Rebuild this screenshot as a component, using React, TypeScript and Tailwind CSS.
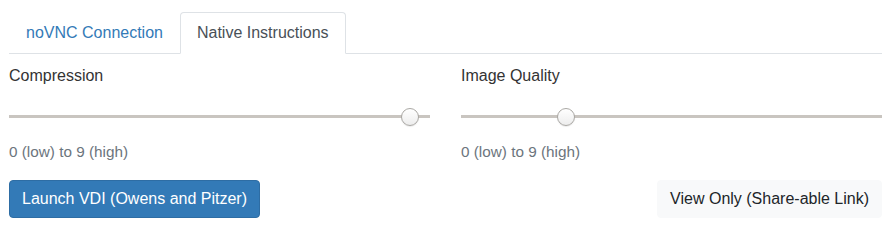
import React from "react";

function Slider({ thumbLeft }: { thumbLeft: string }) {
  return (
    <div className="relative h-[52px]">
      <div className="absolute left-0 right-0 top-[27px] h-[3px] bg-[#c9c5c0]" />
      <div
        className={`absolute top-[20px] h-[18px] w-[18px] rounded-full border border-[#aaa8a4] bg-gradient-to-b from-white to-[#ededed] shadow-[0_1px_1px_rgba(0,0,0,0.08)] ${thumbLeft}`}
      />
    </div>
  );
}

export default function App() {
  return (
    <div
      className="w-[894px] h-[236px] bg-white pt-[12px] pl-[9px] pr-[12px] text-[16px] leading-[24px] text-[#333]"
      style={{ fontFamily: '"Liberation Sans", Arial, Helvetica, sans-serif' }}
    >
      <div className="flex border-b border-[#dee2e6]">
        <div className="-mb-px border border-transparent px-[16px] py-[8px] text-[#337ab7]">
          noVNC Connection
        </div>
        <div className="-mb-px rounded-t-[4px] border border-[#dee2e6] border-b-white bg-white px-[16px] py-[8px] text-[#495057]">
          Native Instructions
        </div>
      </div>
      <div className="pt-[10px]">
        <div className="grid grid-cols-2 gap-x-[31px]">
          <div>
            <div>Compression</div>
            <Slider thumbLeft="left-[392px]" />
            <div className="text-[15.3px] text-[#6c757d]">0 (low) to 9 (high)</div>
          </div>
          <div>
            <div>Image Quality</div>
            <Slider thumbLeft="left-[96px]" />
            <div className="text-[15.3px] text-[#6c757d]">0 (low) to 9 (high)</div>
          </div>
        </div>
        <div className="mt-[16px] flex justify-between">
          <button className="rounded-[4px] border border-[#2e6da4] bg-[#337ab7] px-[12px] py-[6px] text-white">
            Launch VDI (Owens and Pitzer)
          </button>
          <button className="rounded-[4px] border border-[#f8f9fa] bg-[#f8f9fa] px-[12px] py-[6px] text-[#212529]">
            View Only (Share-able Link)
          </button>
        </div>
      </div>
    </div>
  );
}
